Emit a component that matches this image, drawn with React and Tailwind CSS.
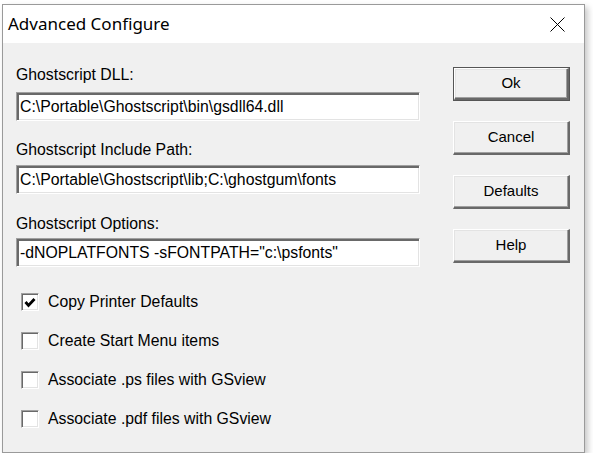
import React from 'react'

const sans = "font-['Liberation_Sans',Arial,sans-serif]"

function Field({ label, value, labelClass }) {
  return (
    <div className="flex flex-col">
      <div className={`text-[15.8px] leading-[18px] text-black ${labelClass}`}>{label}</div>
      <div
        className="flex h-[29px] items-center overflow-hidden whitespace-nowrap border border-b-white border-l-[#a0a0a0] border-r-white border-t-[#a0a0a0] bg-white pl-[3px] text-[15.8px] text-black shadow-[inset_2px_2px_0_#696969,inset_-1px_-1px_0_#e3e3e3]"
      >
        {value}
      </div>
    </div>
  )
}

function Button({ children, isDefault }) {
  const inner = (
    <div className="flex h-full w-full items-center justify-center border-b-2 border-l border-r-2 border-t border-b-[#696969] border-l-white border-r-[#696969] border-t-white bg-[#f0f0f0] text-[15px] text-black shadow-[inset_-1px_-1px_0_#a0a0a0,inset_1px_1px_0_#e3e3e3]">
      {children}
    </div>
  )
  if (isDefault) {
    return <div className="h-[34px] w-[117px] border border-[#555]">{inner}</div>
  }
  return <div className="h-[34px] w-[117px]">{inner}</div>
}

function Checkbox({ label, checked }) {
  return (
    <div className="flex h-[18px] items-center gap-[9px] pl-[5px]">
      <div className="flex h-[18px] w-[18px] items-center justify-center border border-b-white border-l-[#a0a0a0] border-r-white border-t-[#a0a0a0] bg-white shadow-[inset_1px_1px_0_#696969,inset_-1px_-1px_0_#e3e3e3]">
        {checked && (
          <svg width="12" height="11" viewBox="0 0 12 11">
            <path d="M1.5 5 L4.5 8.5 L10.5 2" fill="none" stroke="#000" strokeWidth="2.8" />
          </svg>
        )}
      </div>
      <span className="text-[15.8px] leading-[18px] text-black">{label}</span>
    </div>
  )
}

export default function App() {
  return (
    <div className={`bg-white pl-[2px] pt-[4px] ${sans}`}>
      <div className="flex h-[449px] w-[583px] flex-col border border-[#9a9a9a] shadow-[3px_3px_6px_rgba(0,0,0,0.22)]">
        <div className="flex h-[38px] items-center justify-between bg-white pl-[5px]">
          <span className="font-['Noto_Sans','Open_Sans',sans-serif] text-[17px] text-black">
            Advanced Configure
          </span>
          <div className="flex h-full w-[54px] items-center justify-center">
            <svg width="15" height="15" viewBox="0 0 15 15">
              <path d="M0.5 0.5 L14.5 14.5 M14.5 0.5 L0.5 14.5" stroke="#000" strokeWidth="1" />
            </svg>
          </div>
        </div>

        <div className="flex flex-1 bg-[#f0f0f0] pl-[13px]">
          <div className="flex w-[404px] flex-col pt-[23px]">
            <Field label="Ghostscript DLL:" value="C:\Portable\Ghostscript\bin\gsdll64.dll" labelClass="mb-[8px]" />
            <div className="h-[20px]" />
            <Field
              label="Ghostscript Include Path:"
              value="C:\Portable\Ghostscript\lib;C:\ghostgum\fonts"
              labelClass="mb-[6px]"
            />
            <div className="h-[21px]" />
            <Field
              label="Ghostscript Options:"
              value={'-dNOPLATFONTS -sFONTPATH="c:\\psfonts"'}
              labelClass="mb-[5px]"
            />
            <div className="mt-[26px] flex flex-col gap-[21px]">
              <Checkbox label="Copy Printer Defaults" checked />
              <Checkbox label="Create Start Menu items" />
              <Checkbox label="Associate .ps files with GSview" />
              <Checkbox label="Associate .pdf files with GSview" />
            </div>
          </div>

          <div className="ml-[33px] flex flex-col gap-[20px] pt-[24px]">
            <Button isDefault>Ok</Button>
            <Button>Cancel</Button>
            <Button>Defaults</Button>
            <Button>Help</Button>
          </div>
        </div>
      </div>
    </div>
  )
}
